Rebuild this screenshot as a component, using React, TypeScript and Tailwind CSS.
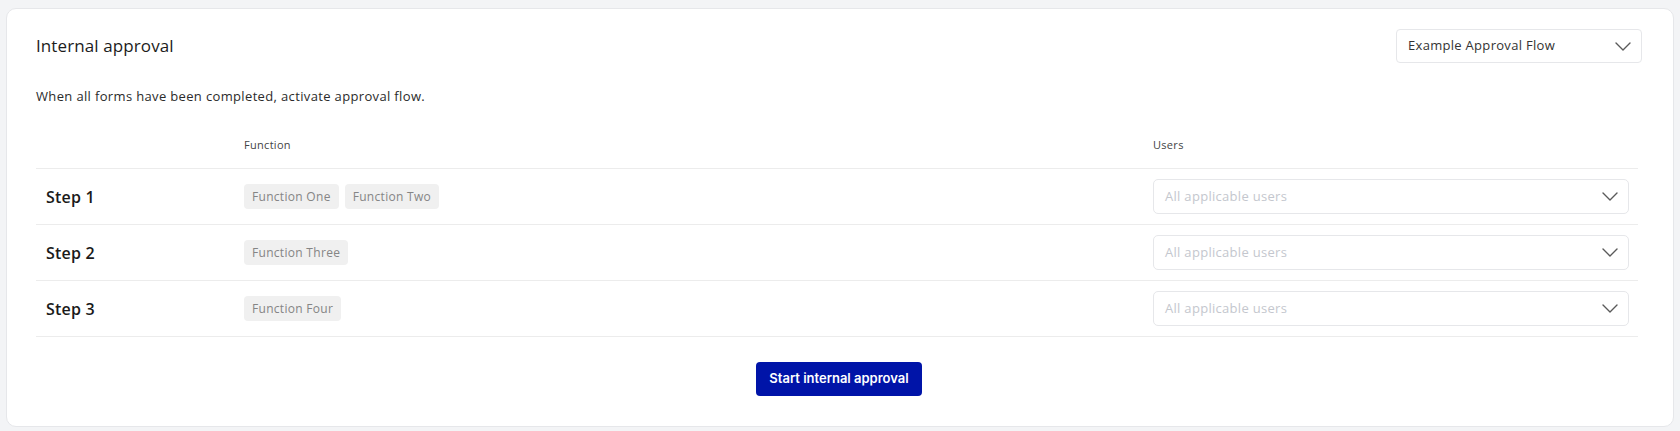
import React from 'react';

const steps = [
    { name: 'Step 1', functions: ['Function One', 'Function Two'] },
    { name: 'Step 2', functions: ['Function Three'] },
    { name: 'Step 3', functions: ['Function Four'] },
];

const Chevron = () => (
    <svg width="16" height="9" viewBox="0 0 16 9" fill="none">
        <polyline points="1,1 8,8 15,1" stroke="#5a5a5a" strokeWidth="1.4" strokeLinecap="round" strokeLinejoin="round" />
    </svg>
);

const Chip = ({ label }: { label: string }) => (
    <span className="inline-flex items-center h-[25px] px-[8px] rounded-[4px] bg-[#f0f0f0] text-[12px] tracking-[0.3px] text-[#858585]">
        {label}
    </span>
);

export default function App() {
    return (
        <div className="min-h-[431px] bg-[#f3f4f6] px-[6px] pt-[8px] pb-[7px]" style={{ fontFamily: '"Open Sans", "Noto Sans", sans-serif' }}>
            <div className="bg-white border border-[#e6e7ea] rounded-[10px] pl-[29px] pr-[31px] pt-[20px] pb-[30px]">

                <div className="flex items-center justify-between">
                    <h2 className="text-[17px] font-medium tracking-[0.1px] text-[#1c1c1c]">Internal approval</h2>
                    <div className="flex items-center justify-between w-[246px] h-[34px] border border-[#e6e7ea] rounded-[4px] pl-[11px] pr-[10px]">
                        <span className="text-[13px] tracking-[0.3px] text-[#333]">Example Approval Flow</span>
                        <Chevron />
                    </div>
                </div>

                <p className="mt-[24px] text-[13px] leading-[18px] tracking-[0.35px] text-[#2b2b2b]">When all forms have been completed, activate approval flow.</p>

                <div className="mr-[4px] mt-[18px]">
                    <div className="flex items-center h-[46px] border-b border-[#ececec] text-[11px] tracking-[0.3px] text-[#444]">
                        <div className="w-[208px] shrink-0"></div>
                        <div className="w-[909px] shrink-0">Function</div>
                        <div className="flex-1">Users</div>
                    </div>

                    {steps.map((step) => (
                        <div key={step.name} className="flex items-center h-[56px] border-b border-[#ececec]">
                            <div className="w-[208px] shrink-0 pl-[10px] text-[16px] font-semibold tracking-[0.2px] text-[#1a1a1a]">{step.name}</div>
                            <div className="w-[909px] shrink-0 flex gap-[6px]">
                                {step.functions.map((f) => <Chip key={f} label={f} />)}
                            </div>
                            <div className="flex-1 pr-[9px]">
                                <div className="flex items-center justify-between h-[35px] border border-[#e6e7ea] rounded-[5px] pl-[11px] pr-[10px]">
                                    <span className="text-[13px] tracking-[0.3px] text-[#c4c7ce]">All applicable users</span>
                                    <Chevron />
                                </div>
                            </div>
                        </div>
                    ))}
                </div>

                <div className="flex justify-center mt-[25px]">
                    <button className="h-[34px] w-[166px] rounded-[4px] bg-[#0014a8] text-white text-[13px] font-semibold" style={{ fontFamily: 'Inter, sans-serif' }}>
                        Start internal approval
                    </button>
                </div>
            </div>
        </div>
    );
}
